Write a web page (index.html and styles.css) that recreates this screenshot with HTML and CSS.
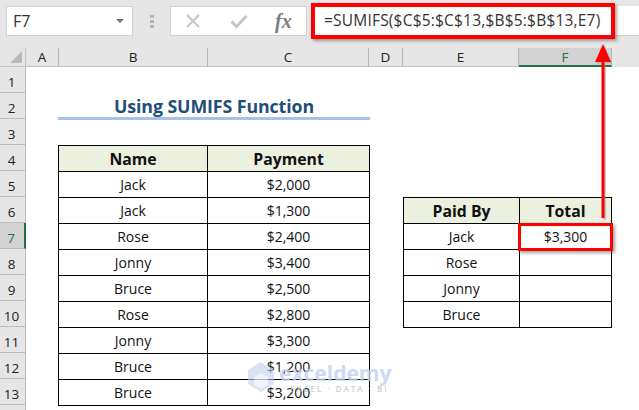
FILE: index.html
```html
<!DOCTYPE html>
<html lang="en">
<head>
<meta charset="utf-8">
<title>Using SUMIFS Function</title>
<link rel="stylesheet" href="styles.css">
</head>
<body>
<div class="app">
  <div class="toolbar">
    <div class="namebox"><span>F7</span><i class="caret"></i></div>
    <div class="grip"><i></i><i></i><i></i></div>
    <div class="fbtns">
      <svg class="ico-x" width="16" height="14" viewBox="0 0 16 14"><path d="M2 1l12 12M14 1L2 13" fill="none" stroke="#c6c6c6" stroke-width="2"/></svg>
      <svg class="ico-c" width="18" height="14" viewBox="0 0 18 14"><path d="M1.5 7.5l5 5L16.5 2" fill="none" stroke="#c6c6c6" stroke-width="3"/></svg>
      <span class="fx">fx</span>
    </div>
    <div class="formula">=SUMIFS($C$5:$C$13,$B$5:$B$13,E7)</div>
  </div>
  <div class="colhead">
    <div class="corner"><i></i></div>
    <div class="col a">A</div>
    <div class="col b">B</div>
    <div class="col c">C</div>
    <div class="col d">D</div>
    <div class="col e">E</div>
    <div class="col f sel">F</div>
  </div>
  <div class="body">
    <div class="rowhead">
      <div>1</div><div>2</div><div>3</div><div>4</div><div>5</div><div>6</div>
      <div class="sel">7</div>
      <div>8</div><div>9</div><div>10</div><div>11</div><div>12</div><div>13</div><div></div>
    </div>
    <div class="sheet">
      <div class="left">
        <div class="title">Using SUMIFS Function</div>
        <table class="t t1">
          <tr><th>Name</th><th>Payment</th></tr>
          <tr><td>Jack</td><td>$2,000</td></tr>
          <tr><td>Jack</td><td>$1,300</td></tr>
          <tr><td>Rose</td><td>$2,400</td></tr>
          <tr><td>Jonny</td><td>$3,400</td></tr>
          <tr><td>Bruce</td><td>$2,500</td></tr>
          <tr><td>Rose</td><td>$2,800</td></tr>
          <tr><td>Jonny</td><td>$3,300</td></tr>
          <tr><td>Bruce</td><td>$1,200</td></tr>
          <tr><td>Bruce</td><td>$3,200</td></tr>
        </table>
      </div>
      <table class="t t2">
        <tr><th>Paid By</th><th>Total</th></tr>
        <tr><td>Jack</td><td>$3,300</td></tr>
        <tr><td>Rose</td><td></td></tr>
        <tr><td>Jonny</td><td></td></tr>
        <tr><td>Bruce</td><td></td></tr>
      </table>
    </div>
  </div>
  <div class="frame frame-formula"></div>
  <div class="frame frame-cell"></div>
  <svg class="arrow" width="24" height="190" viewBox="0 0 24 190">
    <path d="M13 20V176" transform="translate(1.5 1.5)" fill="none" stroke="#9a9a9a" stroke-opacity=".55" stroke-width="3"/>
    <path d="M13 2L5 20H21Z" transform="translate(1.5 1.5)" fill="#9a9a9a" fill-opacity=".55"/>
    <path d="M13 20V176" fill="none" stroke="#f00" stroke-width="3"/>
    <path d="M13 2L5 20H21Z" fill="#f00"/>
  </svg>
  <div class="mark">
    <svg width="28" height="32" viewBox="0 0 28 32"><path d="M14 1L1 9v14l13 8 13-8V9z" fill="#c3d1ef" fill-opacity=".75"/><path d="M14 12l-7 4v8l7 4 7-4v-8z" fill="#fff" fill-opacity=".6"/></svg>
    <div class="mark-text"><b>exceldemy</b><span>EXCEL · DATA · BI</span></div>
  </div>
</div>
</body>
</html>
```
FILE: styles.css
```css
* { box-sizing: border-box; }
html, body { margin: 0; padding: 0; }
body { width: 639px; height: 410px; overflow: hidden; background: #fff; font-family: "Open Sans", "Noto Sans", sans-serif; color: #111; }
.app { position: relative; width: 639px; height: 410px; overflow: hidden; }

.toolbar { height: 48px; background: #e6e6e6; display: flex; align-items: flex-start; padding-top: 6px; padding-left: 6px; }
.namebox { width: 127px; height: 30px; background: #fff; border: 1px solid #d0d0d0; display: flex; align-items: center; justify-content: space-between; padding: 0 8px 0 6px; font-size: 16px; color: #333; }
.caret { width: 0; height: 0; border-left: 4px solid transparent; border-right: 4px solid transparent; border-top: 4px solid #777; }
.grip { width: 37px; height: 30px; display: flex; flex-direction: column; align-items: center; justify-content: center; gap: 2px; }
.grip i { width: 4px; height: 3px; background: #b4b4b4; }
.fbtns { width: 137px; height: 30px; background: #fff; border: 1px solid #d0d0d0; display: flex; align-items: center; padding-left: 14px; }
.ico-c { margin-left: 29px; }
.fx { margin-left: 27px; font-family: "Liberation Serif", serif; font-style: italic; font-weight: 700; font-size: 20px; color: #7d7d7d; line-height: 1; }
.formula { flex: 1; margin-left: 4px; height: 30px; background: #fff; border-bottom: 1px solid #d0d0d0; padding-left: 13px; font-size: 15.5px; line-height: 28px; color: #333; white-space: nowrap; letter-spacing: 0.2px; }

.colhead { height: 19px; background: #e6e6e6; display: flex; font-size: 13.5px; color: #222; }
.corner { width: 26px; border-right: 1px solid #c4c4c4; border-bottom: 1px solid #c4c4c4; position: relative; }
.corner i { position: absolute; right: 3px; bottom: 3px; width: 0; height: 0; border-left: 12px solid transparent; border-bottom: 12px solid #b9b9b9; }
.col { display: flex; align-items: center; justify-content: center; border-right: 1px solid #b5b5b5; border-bottom: 1px solid #c4c4c4; }
.col.a { width: 33px; } .col.b { width: 149px; } .col.c { width: 161px; }
.col.d { width: 34px; } .col.e { width: 116px; } .col.f { width: 93px; }
.col.sel { background: #d2d2d2; border-bottom: 2px solid #217346; color: #217346; }

.body { display: flex; height: 343px; }
.rowhead { width: 26px; flex: none; background: #e6e6e6; border-right: 1px solid #bdbdbd; font-size: 13.5px; color: #222; }
.rowhead div { height: 26px; border-bottom: 1px solid #bcbcbc; display: flex; align-items: flex-end; justify-content: center; padding: 0 2px 0 0; line-height: 20px; }
.rowhead .sel { background: #d2d2d2; border-right: 2px solid #217346; margin-right: -1px; color: #217346; }

.sheet { flex: 1; display: flex; align-items: flex-start; padding-left: 32px; }
.left { width: 345px; flex: none; }
.title { width: 312px; height: 27px; margin-top: 26px; margin-bottom: 25px; border-bottom: 3px solid #a9c1e2; text-align: center; font-size: 17.8px; line-height: 27px; font-weight: 700; color: #1f4e79; letter-spacing: -0.1px; }
.t { border-collapse: collapse; table-layout: fixed; font-size: 14px; color: #111; }
.t th, .t td { border: 1px solid #000; height: 26px; padding: 0; text-align: center; white-space: nowrap; }
.t th { background: #ebf0df; font-size: 15.8px; font-weight: 700; }
.t1 { width: 312px; margin-left: 0; }
.t1 th:first-child { width: 149px; }
.t2 { width: 209px; margin-top: 130px; }
.t2 th:first-child { width: 116px; }

.frame { position: absolute; border-style: solid; border-color: #f00; box-shadow: 2px 2px 3px rgba(90,90,90,.55); }
.frame-formula { left: 311px; top: 3px; width: 304px; height: 36px; border-width: 4px; }
.frame-cell { left: 518px; top: 223px; width: 95px; height: 28px; border-width: 3px; }
.arrow { position: absolute; left: 590px; top: 42px; }

.mark { position: absolute; left: 247px; top: 361px; display: flex; gap: 4px; opacity: .8; pointer-events: none; }
.mark-text { display: flex; flex-direction: column; margin-top: 1px; }
.mark-text b { font-size: 21px; line-height: 22px; color: #c3d1ef; }
.mark-text span { font-size: 8px; line-height: 9px; color: #c4c4c4; letter-spacing: 2px; padding-left: 11px; font-weight: 600; }
```
